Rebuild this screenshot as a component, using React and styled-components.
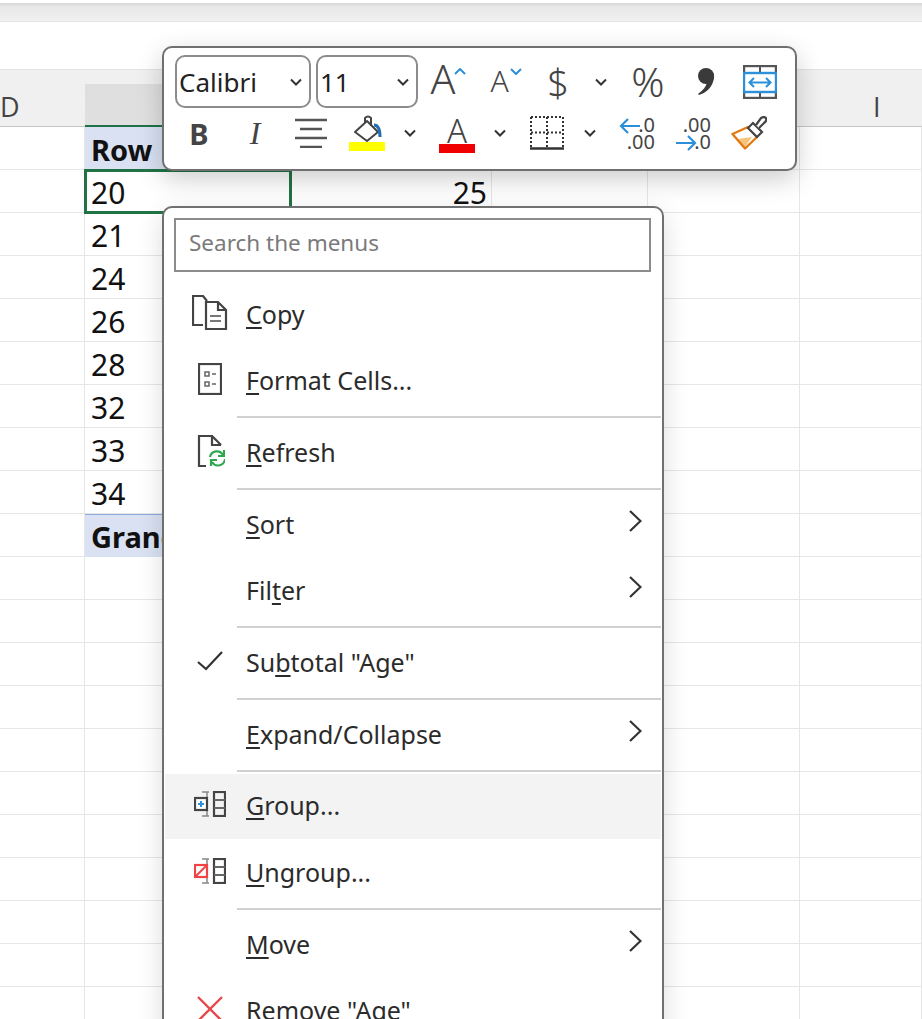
import styled, { createGlobalStyle } from "styled-components";

const FONT = `"Noto Sans", "Open Sans", sans-serif`;
const BLUE = "#2b90d9";

const GlobalStyle = createGlobalStyle`
  html, body {
    margin: 0;
    background: #fff;
    font-family: ${FONT};
  }
`;

const columns = ["D", "E", "F", "G", "H", "I"];

const ages = ["20", "21", "24", "26", "28", "32", "33", "34"];

const Chevron = () => (
  <svg width="12" height="8" viewBox="0 0 12 8" fill="none" stroke="#333" strokeWidth="2">
    <path d="M1 1.5 L6 6.5 L11 1.5" />
  </svg>
);

const Arrow = () => (
  <svg width="13" height="22" viewBox="0 0 13 22" fill="none" stroke="#333" strokeWidth="2.2">
    <path d="M1 1 L11.5 11 L1 21" />
  </svg>
);

const CaretUp = () => (
  <svg width="12" height="7" viewBox="0 0 12 7" fill="none" stroke={BLUE} strokeWidth="2">
    <path d="M1 6 L6 1 L11 6" />
  </svg>
);

const CaretDown = () => (
  <svg width="12" height="7" viewBox="0 0 12 7" fill="none" stroke={BLUE} strokeWidth="2">
    <path d="M1 1 L6 6 L11 1" />
  </svg>
);

const CommaIcon = () => (
  <svg width="18" height="28" viewBox="0 0 18 28">
    <circle cx="9" cy="8" r="8" fill="#3a3a3a" />
    <path d="M11 1 C18 3 18 9 16 14 C14 20 9 25 2 27 L1 26 C6 22 9 19 10 14 Z" fill="#3a3a3a" />
  </svg>
);

const MergeIcon = () => (
  <svg width="34" height="34" viewBox="0 0 34 34" fill="none">
    <rect x="1" y="1" width="32" height="32" stroke="#555" strokeWidth="2.4" />
    <path d="M17 1 V8 M17 27 V33" stroke="#555" strokeWidth="2" />
    <rect x="1" y="8" width="32" height="19" stroke={BLUE} strokeWidth="2.4" fill="#fff" />
    <path d="M7 17.5 H27 M11 13 L6.5 17.5 L11 22 M23 13 L27.5 17.5 L23 22" stroke={BLUE} strokeWidth="2" />
  </svg>
);

const AlignIcon = () => (
  <svg width="32" height="30" viewBox="0 0 32 30" stroke="#555" strokeWidth="2.4">
    <path d="M0 2 H32 M5 11 H27 M0 20 H32 M5 29 H27" />
  </svg>
);

const FillIcon = () => (
  <svg width="36" height="36" viewBox="0 0 36 36" fill="none">
    <path d="M6 17 L18 6 L29 17 L18 26 Z" stroke="#444" strokeWidth="2" strokeLinejoin="round" />
    <path d="M16 8 V3 Q19 0 22 3 V11" stroke="#444" strokeWidth="2" />
    <path d="M25 10 Q31 10 31 22" stroke="#1f6fb5" strokeWidth="3" />
    <rect x="0" y="27" width="36" height="9" fill="#ffff00" />
  </svg>
);

const BordersIcon = () => (
  <svg width="34" height="34" viewBox="0 0 34 34" fill="none" stroke="#333" strokeWidth="2">
    <path d="M1 1 H33 M1 1 V32 M33 1 V32 M17 1 V32 M1 16.5 H33" strokeDasharray="2 2" />
    <path d="M0 32.5 H34" strokeWidth="2.6" />
  </svg>
);

const ArrowLeft = () => (
  <svg width="22" height="18" viewBox="0 0 22 18" fill="none" stroke={BLUE} strokeWidth="2.2">
    <path d="M2 9 H21 M9 2 L2 9 L9 16" />
  </svg>
);

const ArrowRight = () => (
  <svg width="22" height="18" viewBox="0 0 22 18" fill="none" stroke={BLUE} strokeWidth="2.2">
    <path d="M1 9 H20 M13 2 L20 9 L13 16" />
  </svg>
);

const BrushIcon = () => (
  <svg width="36" height="34" viewBox="0 0 36 34" fill="none">
    <path d="M7 23 L21 21 L14 31 Z" fill="#f7c27a" />
    <path d="M1.5 18 L17 11 L26 21 L14 32.5 Z" stroke="#e27a10" strokeWidth="2.4" strokeLinejoin="round" />
    <path d="M17 12 L22 7 L31 16 L26 21 Z" stroke="#444" strokeWidth="2.2" fill="#fff" />
    <path d="M25 9 L30 2 Q33 0 35 2 Q36 5 33 7 L28 12" stroke="#444" strokeWidth="2.2" fill="#fff" />
  </svg>
);

const CopyIcon = () => (
  <svg width="36" height="36" viewBox="0 0 36 36" fill="none" stroke="#444" strokeWidth="2.2">
    <path d="M11 30 H1 V1 H11 L15 6" />
    <path d="M14 7 H26 L34 15 V34 H14 Z M26 7 V15 H34" />
    <path d="M18 21 H29 M18 26 H29" stroke="#777" />
  </svg>
);

const FormatIcon = () => (
  <svg width="24" height="32" viewBox="0 0 24 32" fill="none" stroke="#444" strokeWidth="2.2">
    <rect x="1" y="1" width="22" height="30" />
    <path d="M7 9 H11 V13 H7 Z M7 19 H11 V23 H7 Z M14 11 H18 M14 21 H18" stroke="#666" strokeWidth="1.5" />
  </svg>
);

const RefreshIcon = () => (
  <svg width="30" height="32" viewBox="-3 0 30 32" fill="none" stroke="#444" strokeWidth="2.2">
    <path d="M8 31 H1 V1 H14 L23 10 M14 1 V10 H23" />
    <path d="M12 22 A7 7 0 0 1 25 20 M27 24 A7 7 0 0 1 14 27" stroke="#2ea84f" />
    <path d="M26 15 V21 H20 M13 31 V25 H19" stroke="#2ea84f" />
  </svg>
);

const CheckIcon = () => (
  <svg width="26" height="20" viewBox="0 0 26 20" fill="none" stroke="#333" strokeWidth="2.2">
    <path d="M1 11 L9 18 L25 1" />
  </svg>
);

const GroupIcon = ({ $ungroup }) => (
  <svg width="32" height="26" viewBox="0 0 32 26" fill="none">
    <path d="M8 1 H15 M8 25 H15 M13 1 V6 M13 20 V25" stroke="#888" strokeWidth="1.5" />
    <rect x="20" y="1" width="11" height="24" stroke="#444" strokeWidth="2.2" />
    <path d="M20 9 H31 M20 17 H31" stroke="#666" strokeWidth="2" />
    {$ungroup ? (
      <>
        <rect x="1" y="7" width="12" height="12" stroke="#ef4444" strokeWidth="2.2" />
        <path d="M1 19 L13 7" stroke="#ef4444" strokeWidth="2" />
      </>
    ) : (
      <>
        <rect x="1" y="7" width="12" height="12" stroke="#444" strokeWidth="2.2" fill="#fff" />
        <path d="M4 13 H10 M7 10 V16" stroke={BLUE} strokeWidth="2" />
      </>
    )}
  </svg>
);

const RemoveIcon = () => (
  <svg width="26" height="26" viewBox="0 0 26 26" fill="none" stroke="#e8474c" strokeWidth="2.4">
    <path d="M1 1 L25 25 M25 1 L1 25" />
  </svg>
);

const menu = [
  { icon: <CopyIcon />, label: <><u>C</u>opy</> },
  { icon: <FormatIcon />, label: <><u>F</u>ormat Cells...</> },
  { divider: true },
  { icon: <RefreshIcon />, label: <><u>R</u>efresh</> },
  { divider: true },
  { label: <><u>S</u>ort</>, more: true },
  { label: <>Fil<u>t</u>er</>, more: true },
  { divider: true },
  { icon: <CheckIcon />, label: <>Su<u>b</u>total "Age"</> },
  { divider: true },
  { label: <><u>E</u>xpand/Collapse</>, more: true },
  { divider: true },
  { icon: <GroupIcon />, label: <><u>G</u>roup...</>, active: true },
  { icon: <GroupIcon $ungroup />, label: <><u>U</u>ngroup...</> },
  { divider: true },
  { label: <><u>M</u>ove</>, more: true },
  { icon: <RemoveIcon />, label: <>Remove "Age"</> },
];

const App = () => {
  const rows = Array.from({ length: 21 });
  return (
    <Page>
      <GlobalStyle />
      <TopBar />
      <Sheet>
        {columns.map((col) => (
          <ColumnHead key={col} $selected={col === "E"} $pad={col === "I" ? 73 : col === "D" ? 0 : 80}>
            {col}
          </ColumnHead>
        ))}
        {rows.map((_, r) =>
          columns.map((col) => {
            if (col === "E" && r === 0) return <Cell key={col} $pivot $bold $lift={3}>Row Labels</Cell>;
            if (col === "F" && r === 0) return <Cell key={col} $pivot $bold />;
            if (col === "E" && r === 9) return <Cell key={col} $pivot $bold $total>Grand Total</Cell>;
            if (col === "F" && r === 9) return <Cell key={col} $pivot $bold $total />;
            if (col === "E" && r >= 1 && r <= 8)
              return <Cell key={col} $selected={r === 1}>{ages[r - 1]}</Cell>;
            if (col === "F" && r === 1) return <Cell key={col} $right>25</Cell>;
            return <Cell key={col} />;
          })
        )}
      </Sheet>

      <Toolbar>
        <ToolRow $inset>
          <FontSelect $w={136}>Calibri<Chevron /></FontSelect>
          <FontSelect $w={102}>11<Chevron /></FontSelect>
          <Tool $w={50}>
            <Glyph $size={41} $light $up={3} $back={10}>A</Glyph>
            <Caret $x={31} $y={11}><CaretUp /></Caret>
          </Tool>
          <Tool $w={57}>
            <Glyph $size={30} $light $up={1} $back={4}>A</Glyph>
            <Caret $x={37} $y={11}><CaretDown /></Caret>
          </Tool>
          <Tool><Glyph $size={38} $light>$</Glyph></Tool>
          <ToolArrow><Chevron /></ToolArrow>
          <Tool><Glyph $size={41} $light>%</Glyph></Tool>
          <Tool $left={4}><CommaIcon /></Tool>
          <Tool><MergeIcon /></Tool>
        </ToolRow>
        <ToolRow>
          <Tool><Glyph $size={29} $bold>B</Glyph></Tool>
          <Tool><Glyph $size={32} $italic>I</Glyph></Tool>
          <Tool><AlignIcon /></Tool>
          <Tool><FillIcon /></Tool>
          <ToolArrow><Chevron /></ToolArrow>
          <Tool>
            <ColorStack>
              <Glyph $size={33} $light>A</Glyph>
              <ColorBar />
            </ColorStack>
          </Tool>
          <ToolArrow><Chevron /></ToolArrow>
          <Tool><BordersIcon /></Tool>
          <ToolArrow><Chevron /></ToolArrow>
          <Tool>
            <Decimals>
              <span>.0</span>
              <span>.00</span>
              <DecimalArrow $top={1} $left={0}><ArrowLeft /></DecimalArrow>
            </Decimals>
          </Tool>
          <Tool>
            <Decimals>
              <span>.00</span>
              <span>.0</span>
              <DecimalArrow $top={18} $left={0}><ArrowRight /></DecimalArrow>
            </Decimals>
          </Tool>
          <Tool><BrushIcon /></Tool>
        </ToolRow>
      </Toolbar>

      <Menu>
        <Search>Search the menus</Search>
        {menu.map((entry, i) =>
          entry.divider ? (
            <Divider key={i} />
          ) : (
            <MenuRow key={i} $active={entry.active}>
              <MenuIcon>{entry.icon}</MenuIcon>
              <MenuLabel>{entry.label}</MenuLabel>
              {entry.more && <MoreArrow><Arrow /></MoreArrow>}
            </MenuRow>
          )
        )}
      </Menu>
    </Page>
  );
};

export default App;

const Page = styled.div`
  position: relative;
  height: 100vh;
  overflow: hidden;
  background: #fff;
`;

const TopBar = styled.div`
  box-sizing: border-box;
  height: 22px;
  margin-bottom: 47px;
  border-top: 3px solid #fff;
  border-bottom: 1px solid #e4e4e4;
  background: linear-gradient(#d8d8d8, #e8e8e8 25%, #f1f1f1);
`;

const Sheet = styled.div`
  display: grid;
  grid-template-columns: 85px 206px 201px 156px 152px 1fr;
  grid-auto-rows: 43px;
  grid-template-rows: 58px;
`;

const ColumnHead = styled.div`
  box-sizing: border-box;
  position: relative;
  padding: 20px 0 0 ${(p) => p.$pad}px;
  font-family: "Open Sans", sans-serif;
  font-size: 27px;
  line-height: 34px;
  color: #444;
  background: #f0f0f0;
  border-top: 1px solid #e2e2e2;
  border-bottom: 1px solid #c6c6c6;

  ${(p) =>
    p.$selected &&
    `
    border-bottom: 2px solid #217346;
    background: linear-gradient(#f0f0f0 14px, #dedede 14px, #e0e0e0);
  `}
`;

const Cell = styled.div`
  box-sizing: border-box;
  position: relative;
  display: flex;
  align-items: center;
  justify-content: ${(p) => (p.$right ? "flex-end" : "flex-start")};
  padding: ${(p) => p.$lift || (p.$bold ? 1 : 3)}px ${(p) => (p.$right ? 4 : 6)}px 0 6px;
  overflow: hidden;
  white-space: nowrap;
  font-size: ${(p) => (p.$bold ? 29 : 30)}px;
  font-weight: ${(p) => (p.$bold ? 700 : 400)};
  word-spacing: 10px;
  color: #111;
  border-right: 1px solid ${(p) => (p.$pivot ? "transparent" : "#e6e6e6")};
  border-bottom: 1px solid #e6e6e6;
  background: ${(p) => (p.$pivot ? "#d9e1f2" : "#fff")};

  ${(p) => p.$total && "border-top: 1px solid #8ea9db; border-bottom-color: #d9e1f2;"}
  ${(p) =>
    p.$selected &&
    `
    z-index: 1;
    overflow: visible;
    outline: 3px solid #217346;
    outline-offset: -2px;
  `}
`;

const Toolbar = styled.div`
  position: absolute;
  left: 162px;
  top: 46px;
  z-index: 3;
  box-sizing: border-box;
  width: 635px;
  height: 125px;
  padding: 7px 7px 0;
  background: #fff;
  border: 2px solid #707070;
  border-radius: 10px;
  box-shadow: 0 8px 26px rgba(0, 0, 0, 0.2);
`;

const ToolRow = styled.div`
  display: flex;
  align-items: center;
  height: ${(p) => (p.$inset ? 53 : 50)}px;
  padding-left: ${(p) => (p.$inset ? 4 : 0)}px;
`;

const FontSelect = styled.div`
  box-sizing: border-box;
  display: flex;
  flex: none;
  align-items: center;
  justify-content: space-between;
  width: ${(p) => p.$w}px;
  height: 53px;
  margin-right: 5px;
  padding: 0 7px 0 2px;
  font-size: 26px;
  color: #222;
  border: 2px solid #8c8c8c;
  border-radius: 10px;
`;

const Tool = styled.div`
  position: relative;
  display: flex;
  flex: none;
  align-items: center;
  justify-content: center;
  box-sizing: border-box;
  width: ${(p) => p.$w || 56}px;
  height: 50px;
  padding-left: ${(p) => p.$left || 0}px;
`;

const ToolArrow = styled.div`
  display: flex;
  flex: none;
  align-items: center;
  justify-content: center;
  width: 30px;
  height: 50px;
  margin-right: 4px;
`;

const Caret = styled.span`
  position: absolute;
  left: ${(p) => p.$x}px;
  top: ${(p) => p.$y}px;
  display: flex;
`;

const Glyph = styled.span`
  font-family: ${(p) => (p.$italic ? `"Liberation Serif", serif` : FONT)};
  font-size: ${(p) => p.$size}px;
  font-weight: ${(p) => (p.$bold ? 700 : p.$light ? 300 : 400)};
  font-style: ${(p) => (p.$italic ? "italic" : "normal")};
  line-height: 1;
  margin-bottom: ${(p) => (p.$up || 0) * 2}px;
  margin-right: ${(p) => p.$back || 0}px;
  color: #444;
`;

const ColorStack = styled.div`
  display: flex;
  flex-direction: column;
  align-items: center;
  height: 38px;
`;

const ColorBar = styled.div`
  flex: none;
  width: 36px;
  height: 9px;
  margin-top: -3px;
  background: #f00000;
`;

const Decimals = styled.div`
  position: relative;
  display: flex;
  flex-direction: column;
  align-items: flex-end;
  width: 36px;
  font-size: 20px;
  line-height: 17px;
  color: #444;
`;

const DecimalArrow = styled.span`
  position: absolute;
  left: ${(p) => p.$left}px;
  top: ${(p) => p.$top}px;
  display: flex;
`;

const Menu = styled.div`
  position: absolute;
  left: 162px;
  top: 206px;
  z-index: 2;
  box-sizing: border-box;
  width: 502px;
  padding: 10px 1px;
  background: #fff;
  border: 2px solid #707070;
  border-radius: 10px;
  box-shadow: 0 8px 26px rgba(0, 0, 0, 0.14);
`;

const Search = styled.div`
  box-sizing: border-box;
  display: flex;
  align-items: center;
  height: 54px;
  margin: 0 10px 11px 9px;
  padding: 0 13px 6px;
  font-size: 22.5px;
  color: #7a7a7a;
  border: 2px solid #8c8c8c;
`;

const MenuRow = styled.div`
  position: relative;
  display: flex;
  align-items: center;
  height: ${(p) => (p.$active ? 65 : 66)}px;
  margin: ${(p) => (p.$active ? "-1px 0 2px" : "0")};
  background: ${(p) => (p.$active ? "#f3f3f3" : "transparent")};
`;

const MenuIcon = styled.div`
  display: flex;
  flex: none;
  align-items: center;
  justify-content: center;
  box-sizing: border-box;
  width: 81px;
  padding-left: 8px;
  margin-bottom: 6px;
`;

const MenuLabel = styled.div`
  margin-bottom: 4px;
  font-size: 25px;
  color: #2b2b2b;
  white-space: nowrap;

  u {
    text-decoration-thickness: 2px;
    text-underline-offset: 3px;
  }
`;

const MoreArrow = styled.div`
  position: absolute;
  right: 19px;
  top: 17px;
  display: flex;
`;

const Divider = styled.div`
  height: 2px;
  margin: 1px 0 3px 72px;
  background: #d0d0d0;
`;
